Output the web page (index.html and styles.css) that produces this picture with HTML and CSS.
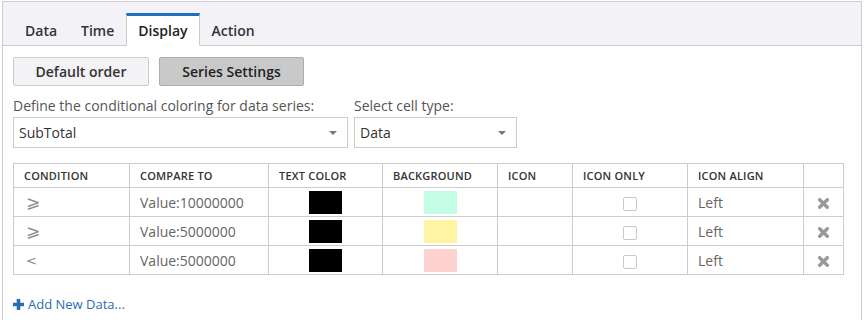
FILE: index.html
```html
<!DOCTYPE html>
<html>
<head>
<meta charset="utf-8">
<link rel="stylesheet" href="styles.css">
</head>
<body>
<div class="panel">
  <div class="tabbar">
    <div class="tab">Data</div>
    <div class="tab">Time</div>
    <div class="tab active">Display</div>
    <div class="tab">Action</div>
  </div>
  <div class="content">
    <div class="btnrow">
      <button class="btn btn-default">Default order</button>
      <button class="btn btn-series">Series Settings</button>
    </div>
    <div class="fields">
      <div class="field field-series">
        <div class="label">Define the conditional coloring for data series:</div>
        <div class="select"><span>SubTotal</span><span class="caret"></span></div>
      </div>
      <div class="field field-type">
        <div class="label">Select cell type:</div>
        <div class="select"><span>Data</span><span class="caret"></span></div>
      </div>
    </div>
    <table class="grid">
      <colgroup>
        <col class="c1"><col class="c2"><col class="c3"><col class="c4"><col class="c5"><col class="c6"><col class="c7"><col class="c8">
      </colgroup>
      <thead>
        <tr><th>Condition</th><th>Compare To</th><th>Text Color</th><th>Background</th><th>Icon</th><th>Icon Only</th><th>Icon Align</th><th></th></tr>
      </thead>
      <tbody>
        <tr>
          <td class="cond">⩾</td><td>Value:10000000</td>
          <td class="center"><span class="swatch black"></span></td>
          <td class="center"><span class="swatch mint"></span></td>
          <td></td>
          <td class="center"><span class="check"></span></td>
          <td>Left</td>
          <td class="center"><svg class="del" width="11" height="11" viewBox="0 0 11 11"><path d="M1.7 1.7 L9.3 9.3 M9.3 1.7 L1.7 9.3" stroke="#999" stroke-width="3.4" stroke-linecap="round"/></svg></td>
        </tr>
        <tr>
          <td class="cond">⩾</td><td>Value:5000000</td>
          <td class="center"><span class="swatch black"></span></td>
          <td class="center"><span class="swatch yellow"></span></td>
          <td></td>
          <td class="center"><span class="check"></span></td>
          <td>Left</td>
          <td class="center"><svg class="del" width="11" height="11" viewBox="0 0 11 11"><path d="M1.7 1.7 L9.3 9.3 M9.3 1.7 L1.7 9.3" stroke="#999" stroke-width="3.4" stroke-linecap="round"/></svg></td>
        </tr>
        <tr>
          <td class="cond lt">&lt;</td><td>Value:5000000</td>
          <td class="center"><span class="swatch black"></span></td>
          <td class="center"><span class="swatch pink"></span></td>
          <td></td>
          <td class="center"><span class="check"></span></td>
          <td>Left</td>
          <td class="center"><svg class="del" width="11" height="11" viewBox="0 0 11 11"><path d="M1.7 1.7 L9.3 9.3 M9.3 1.7 L1.7 9.3" stroke="#999" stroke-width="3.4" stroke-linecap="round"/></svg></td>
        </tr>
      </tbody>
    </table>
    <div class="addrow">
      <svg class="plus" width="11" height="11" viewBox="0 0 11 11"><path d="M3.7 0 H7.3 V3.7 H11 V7.3 H7.3 V11 H3.7 V7.3 H0 V3.7 H3.7 Z" fill="#2a6db5"/></svg>
      <span>Add New Data...</span>
    </div>
  </div>
</div>
</body>
</html>
```

FILE: styles.css
```css
* { box-sizing: border-box; }
html, body { margin: 0; padding: 0; background: #fff; }
body {
  font-family: "Open Sans", "Noto Sans", sans-serif;
  color: #333;
  font-size: 14px;
}
.panel {
  margin: 1px 0 0 2px;
  width: 860px;
  height: 330px;
  border: 1px solid #cccccc;
}
.tabbar {
  display: flex;
  align-items: flex-end;
  height: 44px;
  background: #f3f2f7;
  border-bottom: 1px solid #cccccc;
  padding-left: 10px;
}
.tab {
  height: 33px;
  padding: 0 11px;
  margin-right: 0;
  font-weight: 600;
  font-size: 14px;
  line-height: 30px;
  color: #333;
  border: 1px solid transparent;
  border-top-width: 3px;
  margin-bottom: -1px;
}
.tab.active {
  background: #fff;
  border-color: #cccccc;
  border-top-color: #1f6ec0;
  border-bottom-color: #fff;
  color: #222;
}
.content {
  padding: 11px 0 0 10px;
}
.btnrow {
  display: flex;
  gap: 10px;
}
.btn {
  height: 29px;
  font-family: inherit;
  font-size: 14px;
  font-weight: 600;
  color: #333;
  border-radius: 2px;
  padding: 0;
  margin: 0;
}
.btn-default {
  width: 136px;
  background: #f3f2f7;
  border: 1px solid #cccccc;
}
.btn-series {
  width: 145px;
  background: #c9c9c9;
  border: 1px solid #adadad;
  color: #222;
}
.fields {
  display: flex;
  gap: 6px;
  margin-top: 11px;
}
.label {
  font-size: 14px;
  color: #555;
  line-height: 18px;
  height: 20px;
}
.select {
  margin-top: 0;
  height: 31px;
  border: 1px solid #cccccc;
  display: flex;
  align-items: center;
  justify-content: space-between;
  padding: 0 10px 0 5px;
  font-size: 14px;
  color: #333;
}
.field-series .select { width: 335px; }
.field-type .select { width: 163px; }
.caret {
  width: 0;
  height: 0;
  border-left: 4px solid transparent;
  border-right: 4px solid transparent;
  border-top: 4px solid #777;
}
.grid {
  margin-top: 15px;
  border-collapse: collapse;
  table-layout: fixed;
  width: 830px;
}
.c1 { width: 116px; }
.c2 { width: 139px; }
.c3 { width: 114px; }
.c4 { width: 115px; }
.c5 { width: 75px; }
.c6 { width: 115px; }
.c7 { width: 116px; }
.c8 { width: 40px; }
.grid th, .grid td {
  border: 1px solid #cccccc;
  padding: 0 0 0 10px;
  text-align: left;
}
.grid th {
  height: 24px;
  font-size: 11px;
  font-weight: 600;
  text-transform: uppercase;
  color: #333;
  letter-spacing: 0.2px;
}
.grid td {
  height: 29px;
  font-size: 14px;
  color: #666;
}
.grid td.center { text-align: center; padding: 0; }
.grid td.cond { font-family: "DejaVu Sans", sans-serif; font-size: 17px; color: #888; padding-left: 12px; }
.grid td.cond.lt { font-size: 13px; }
.swatch {
  display: inline-block;
  width: 33px;
  height: 23px;
  vertical-align: middle;
}
.black { background: #000; }
.mint { background: #c3fde6; }
.yellow { background: #fff4a3; }
.pink { background: #ffd2d2; }
.check {
  display: inline-block;
  width: 14px;
  height: 14px;
  border: 1px solid #c8c8c8;
  border-radius: 2px;
  background: #fff;
  vertical-align: middle;
}
.del { vertical-align: middle; }
.addrow {
  display: flex;
  align-items: center;
  gap: 4px;
  margin-top: 20px;
  color: #2a6db5;
  font-size: 13px;
}
```
